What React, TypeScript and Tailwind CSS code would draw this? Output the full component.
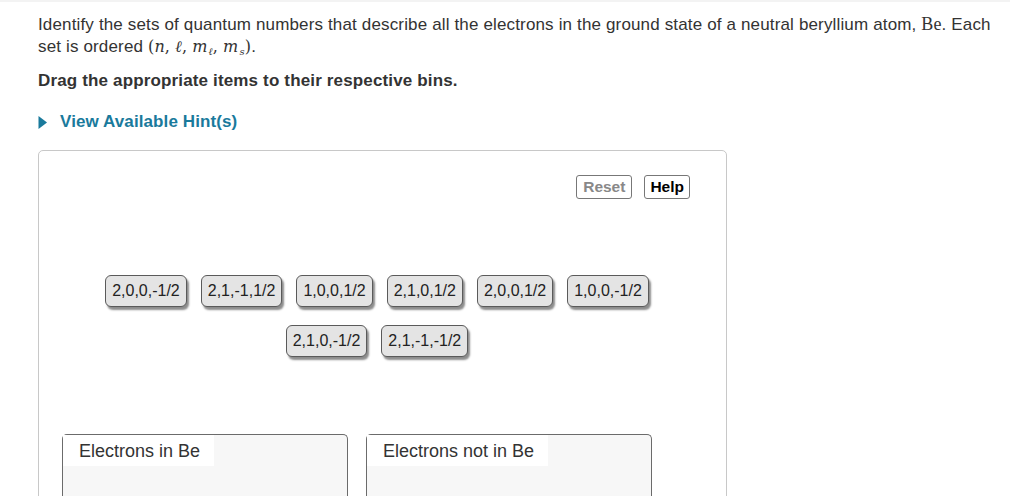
import type { JSX } from 'react'

const rowOne = ['2,0,0,-1/2', '2,1,-1,1/2', '1,0,0,1/2', '2,1,0,1/2', '2,0,0,1/2', '1,0,0,-1/2']
const rowTwo = ['2,1,0,-1/2', '2,1,-1,-1/2']

function Chip({ label }: { label: string }): JSX.Element {
  return (
    <div className="rounded-[6px] border border-[#5a5a5a] bg-[#e4e4e4] px-[6px] py-[6px] text-[16px] leading-[18px] text-[#222] shadow-[2px_3px_2px_rgba(0,0,0,0.45)]">
      {label}
    </div>
  )
}

function Bin({ title }: { title: string }): JSX.Element {
  return (
    <div className="h-[80px] w-[286px] rounded-t-[5px] border border-b-0 border-[#6b6b6b] bg-[#f7f7f7]">
      <div className="inline-block bg-white pl-[16px] pr-[14px] pt-[6px] pb-[5px] text-[18px] leading-[20px] text-[#333]">
        {title}
      </div>
    </div>
  )
}

function QuantumTuple(): JSX.Element {
  return (
    <span className="inline-flex items-baseline font-['DejaVu_Serif',serif] text-[16px] leading-[20px]">
      <span>(</span>
      <span className="italic">n</span>
      <span className="mr-[5px]">,</span>
      <span className="italic">ℓ</span>
      <span className="mr-[5px]">,</span>
      <span className="italic">m</span>
      <span className="ml-px translate-y-[3px] text-[10px] italic leading-[12px]">ℓ</span>
      <span className="mr-[5px]">,</span>
      <span className="italic">m</span>
      <span className="ml-px translate-y-[3px] text-[10px] italic leading-[12px]">s</span>
      <span>)</span>
    </span>
  )
}

export default function App(): JSX.Element {
  return (
    <div className="h-[496px] w-[1036px] overflow-hidden bg-white font-['Liberation_Sans',Arial,sans-serif] text-[#333]">
      <div className="h-[2px] w-[1010px] bg-[#f3f3f3]" />
      <div className="pl-[38px] pr-[36px] pt-[11px]">
        <p className="text-[17px] leading-[22px] tracking-[0.15px] text-[#333]">
          Identify the sets of quantum numbers that describe all the electrons in the ground state of a neutral beryllium atom,{' '}
          <span className="font-['Liberation_Serif',serif] text-[18px]">Be</span>. Each set is ordered <QuantumTuple />.
        </p>
        <p className="mt-[12px] text-[17px] font-bold leading-[22px] tracking-[0.15px] text-[#333]">
          Drag the appropriate items to their respective bins.
        </p>
        <div className="mt-[19px] flex items-center gap-[13px] text-[17px] font-bold leading-[22px] tracking-[0.1px] text-[#1a7a9c]">
          <svg width="9" height="13" viewBox="0 0 9 13">
            <path d="M0.5 0 L9 6.5 L0.5 13 Z" fill="#1a7a9c" />
          </svg>
          <span>View Available Hint(s)</span>
        </div>
        <div className="mt-[17px] h-[400px] w-[689px] rounded-t-[5px] border border-[#c8c8c8]">
          <div className="flex justify-end gap-[12px] pr-[36px] pt-[24px]">
            <button className="rounded-[3px] border border-[#777] px-[6px] py-[2px] text-[15.5px] font-bold leading-[18px] text-[#888]">
              Reset
            </button>
            <button className="rounded-[3px] border border-[#777] px-[5px] py-[2px] text-[15.5px] font-bold leading-[18px] text-black">
              Help
            </button>
          </div>
          <div className="ml-[38px] mt-[76px] flex w-[600px] flex-wrap justify-center gap-x-[14px] gap-y-[18px]">
            {rowOne.concat(rowTwo).map((c) => (
              <Chip key={c} label={c} />
            ))}
          </div>
          <div className="mt-[77px] flex gap-[18px] pl-[23px]">
            <Bin title="Electrons in Be" />
            <Bin title="Electrons not in Be" />
          </div>
        </div>
      </div>
    </div>
  )
}
